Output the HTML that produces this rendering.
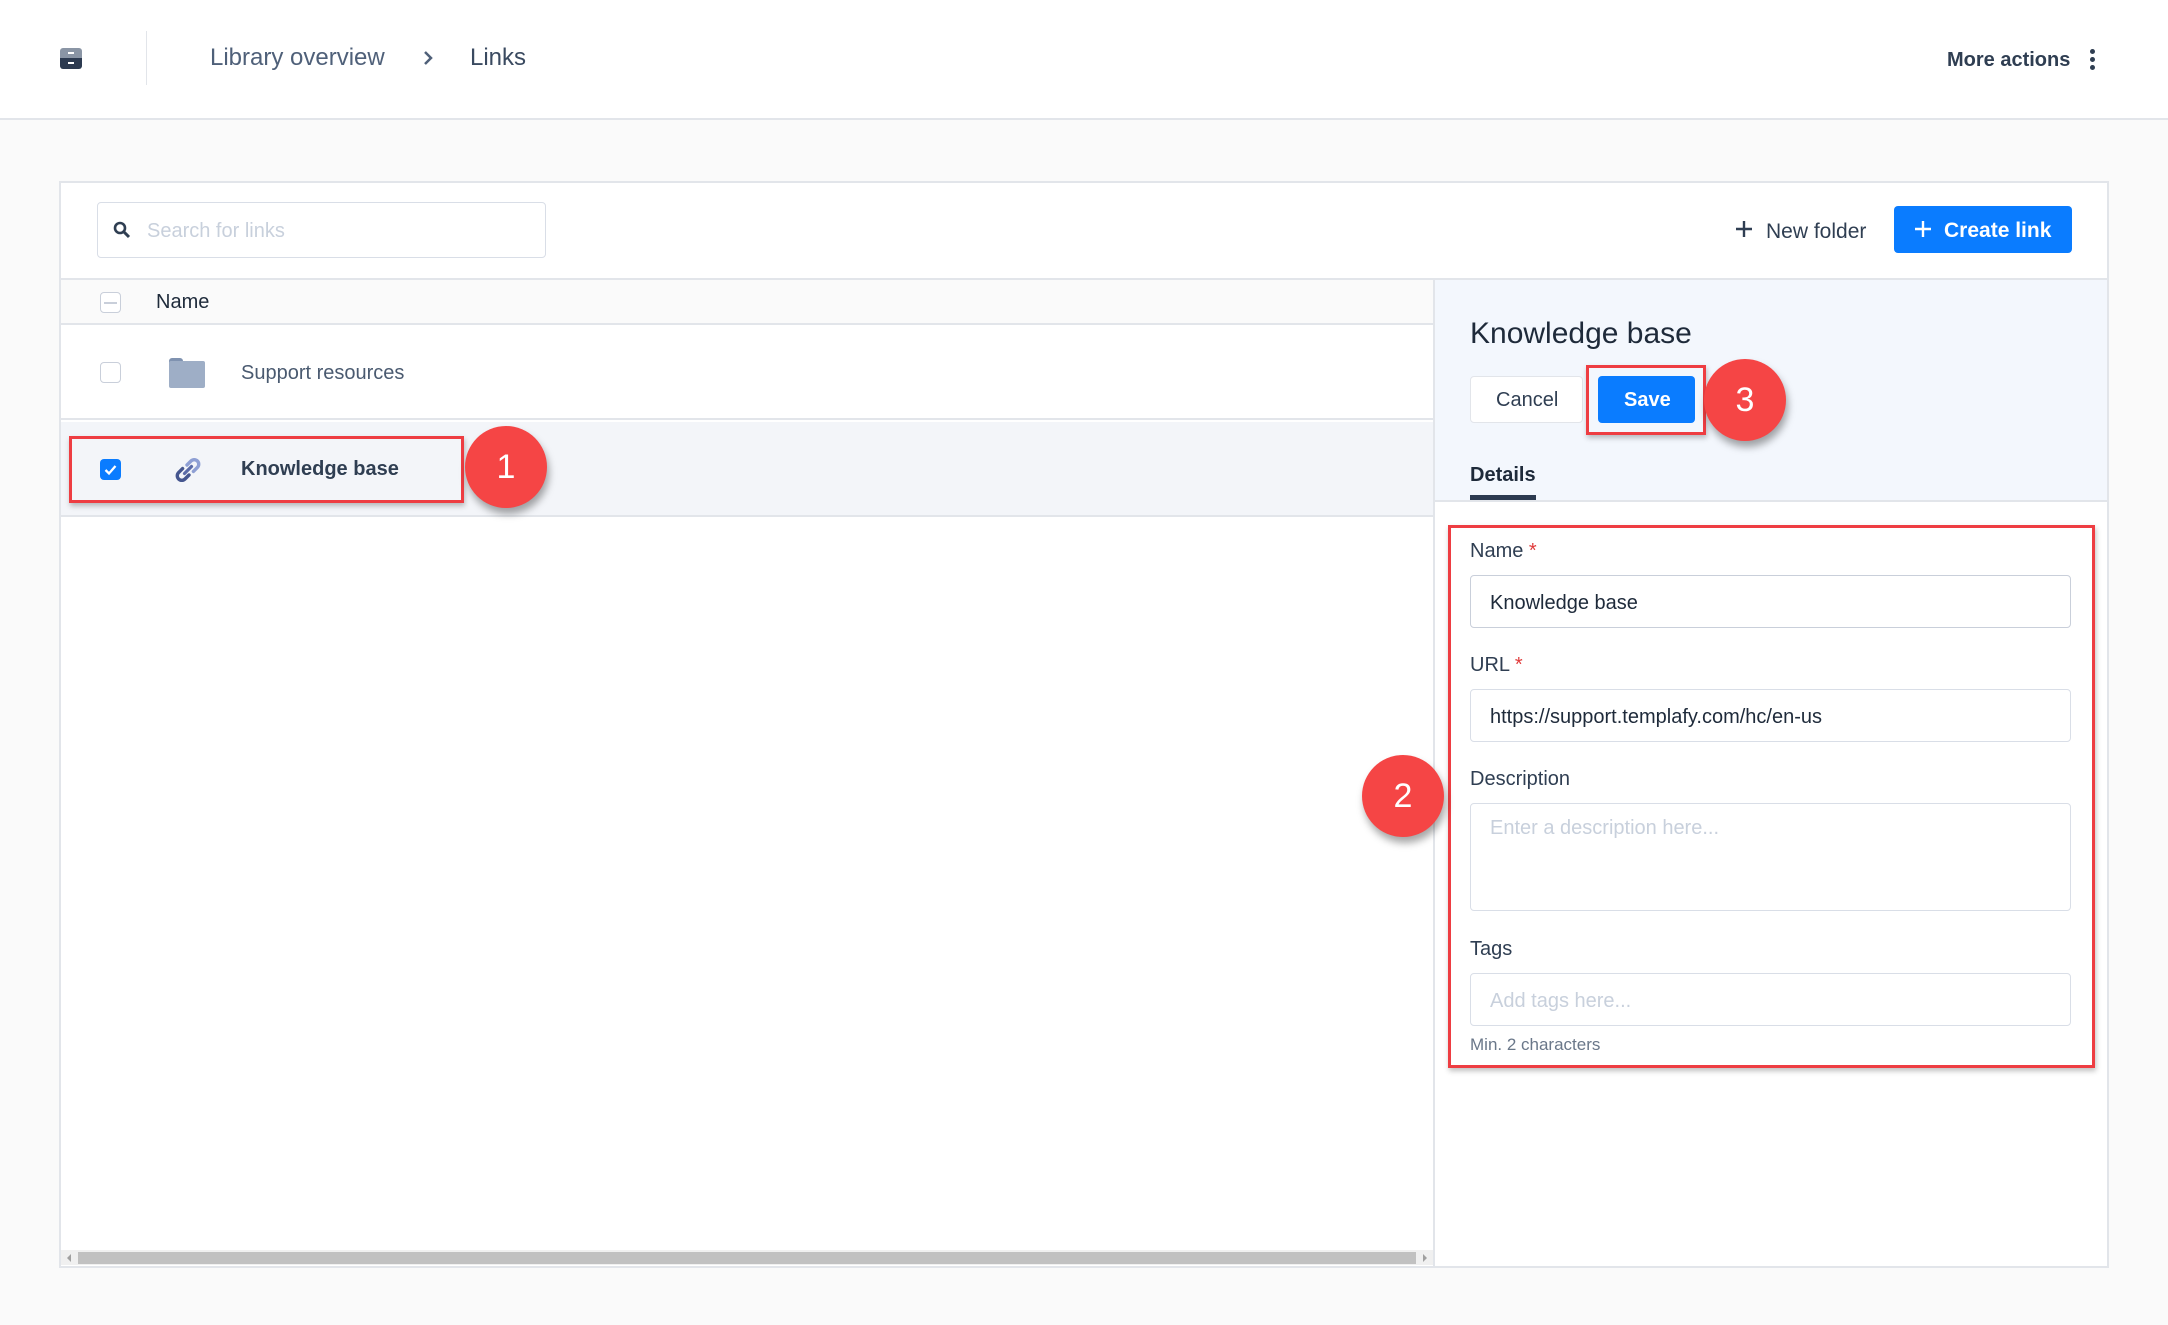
<!DOCTYPE html>
<html><head><meta charset="utf-8">
<style>
*{margin:0;padding:0;box-sizing:border-box}
body{width:2168px;height:1325px;background:#fafafa;font-family:"Liberation Sans",Arial,sans-serif;position:relative;overflow:hidden;color:#2f3e52}
.a{position:absolute}
.t{position:absolute;white-space:nowrap;line-height:1}
.cb{position:absolute;width:21px;height:21px;border:1.5px solid #c9cfda;border-radius:4px;background:#fff}
.inp{position:absolute;left:1470px;width:601px;background:#fff;border:1.5px solid #d9dee7;border-radius:4px}
.lbl{position:absolute;left:1470px;font-size:20px;color:#2f3e52;line-height:1}
.star{color:#e03a3a}
.circ{position:absolute;width:82px;height:82px;border-radius:50%;background:#f54545;color:#fff;font-size:34px;text-align:center;line-height:82px;box-shadow:2px 6px 8px rgba(0,0,0,.35)}
.rbox{position:absolute;border:3px solid #ee3d42;box-shadow:1px 3px 5px rgba(0,0,0,.25)}
</style></head><body>
<!-- header -->
<div class="a" style="left:0;top:0;width:2168px;height:120px;background:#fff;border-bottom:2px solid #e2e5ea"></div>
<div class="a" style="left:60px;top:48px;width:22px;height:10px;background:#8a95a5;border-radius:3px 3px 0 0"></div>
<div class="a" style="left:60px;top:58px;width:22px;height:11px;background:#2c3a50;border-radius:0 0 3px 3px"></div>
<div class="a" style="left:68px;top:52px;width:6px;height:2px;background:#fff"></div>
<div class="a" style="left:68px;top:62px;width:6px;height:2px;background:#fff"></div>
<div class="a" style="left:146px;top:31px;width:1px;height:54px;background:#e2e5ea"></div>
<div class="t" style="left:210px;top:46px;font-size:24px;color:#4f6079">Library overview</div>
<svg class="a" style="left:421px;top:50px" width="14" height="16" viewBox="0 0 14 16"><path d="M4 2l6 6-6 6" stroke="#4f6079" stroke-width="2.5" fill="none"/></svg>
<div class="t" style="left:470px;top:46px;font-size:24px;color:#3a4a60;font-weight:500">Links</div>
<div class="t" style="left:1947px;top:50px;font-size:20px;color:#2f3e52;font-weight:600">More actions</div>
<div class="a" style="left:2090px;top:49px;width:5px;height:5px;border-radius:50%;background:#2f3e52"></div>
<div class="a" style="left:2090px;top:57px;width:5px;height:5px;border-radius:50%;background:#2f3e52"></div>
<div class="a" style="left:2090px;top:65px;width:5px;height:5px;border-radius:50%;background:#2f3e52"></div>

<!-- card -->
<div class="a" style="left:59px;top:181px;width:2050px;height:1087px;background:#fff;border:2px solid #e2e5ea"></div>
<div class="a" style="left:97px;top:202px;width:449px;height:56px;border:1.5px solid #d9dee7;border-radius:4px;background:#fff"></div>
<svg class="a" style="left:112px;top:220px" width="20" height="20" viewBox="0 0 20 20"><circle cx="8" cy="8" r="5" stroke="#2f3e52" stroke-width="2.6" fill="none"/><path d="M12 12l5 5" stroke="#2f3e52" stroke-width="3"/></svg>
<div class="t" style="left:147px;top:221px;font-size:20px;color:#c8d0dc">Search for links</div>
<svg class="a" style="left:1735px;top:220px" width="18" height="18" viewBox="0 0 18 18"><path d="M9 1v16M1 9h16" stroke="#2f3e52" stroke-width="2.4"/></svg>
<div class="t" style="left:1766px;top:221px;font-size:21px;color:#2f3e52;font-weight:500">New folder</div>
<div class="a" style="left:1894px;top:206px;width:178px;height:47px;background:#0a7cff;border-radius:4px"></div>
<svg class="a" style="left:1914px;top:220px" width="18" height="18" viewBox="0 0 18 18"><path d="M9 1v16M1 9h16" stroke="#fff" stroke-width="2.4"/></svg>
<div class="t" style="left:1944px;top:220px;font-size:21px;color:#fff;font-weight:bold">Create link</div>
<div class="a" style="left:61px;top:278px;width:2046px;height:2px;background:#e2e5ea"></div>

<!-- list -->
<div class="a" style="left:61px;top:280px;width:1372px;height:45px;background:#fafafa;border-bottom:2px solid #e2e5ea"></div>
<div class="cb" style="left:100px;top:292px"></div>
<div class="a" style="left:104px;top:302px;width:13px;height:2px;background:#c9cfda"></div>
<div class="t" style="left:156px;top:292px;font-size:20px;color:#1e2a3a">Name</div>
<div class="a" style="left:61px;top:327px;width:1372px;height:93px;background:#fff;border-bottom:2px solid #e2e5ea"></div>
<div class="cb" style="left:100px;top:362px"></div>
<div class="a" style="left:169px;top:358px;width:14px;height:6px;background:#7f92b0;border-radius:3px 3px 0 0"></div>
<div class="a" style="left:169px;top:361px;width:36px;height:27px;background:#9eaec6;border-radius:2px"></div>
<div class="t" style="left:241px;top:363px;font-size:20px;color:#4a5a70">Support resources</div>
<div class="a" style="left:61px;top:422px;width:1372px;height:95px;background:#f3f5f9;border-bottom:2px solid #e2e5ea"></div>
<div class="a" style="left:100px;top:459px;width:21px;height:21px;background:#0a7cff;border-radius:4px"></div>
<svg class="a" style="left:102px;top:461px" width="17" height="17" viewBox="0 0 17 17"><path d="M3.5 9l3.5 3.5 6.5-7.5" stroke="#fff" stroke-width="2.3" fill="none"/></svg>
<svg class="a" style="left:172px;top:454px" width="32" height="32" viewBox="0 0 32 32"><path d="M15 11l4-4a4.5 4.5 0 0 1 6.4 6.4l-4 4" stroke="#8e9fd4" stroke-width="3.4" fill="none" stroke-linecap="round"/><path d="M17 21l-4 4a4.5 4.5 0 0 1-6.4-6.4l4-4" stroke="#45568f" stroke-width="3.4" fill="none" stroke-linecap="round"/><path d="M12.5 19.5l7-7" stroke="#5b6ba8" stroke-width="3.2" stroke-linecap="round"/></svg>
<div class="t" style="left:241px;top:459px;font-size:20px;color:#2f3e52;font-weight:bold">Knowledge base</div>
<div class="rbox" style="left:69px;top:436px;width:395px;height:67px"></div>
<div class="circ" style="left:465px;top:426px">1</div>

<!-- scrollbar -->
<div class="a" style="left:61px;top:1250px;width:1372px;height:15px;background:#f0f0f0"></div>
<div class="a" style="left:78px;top:1252px;width:1338px;height:12px;background:#c1c1c1"></div>
<svg class="a" style="left:65px;top:1253px" width="8" height="10"><path d="M6 1L2 5l4 4z" fill="#a0a0a0"/></svg>
<svg class="a" style="left:1421px;top:1253px" width="8" height="10"><path d="M2 1l4 4-4 4z" fill="#a0a0a0"/></svg>

<!-- right panel -->
<div class="a" style="left:1433px;top:280px;width:2px;height:986px;background:#e2e5ea"></div>
<div class="a" style="left:1435px;top:280px;width:672px;height:222px;background:#f3f7fd;border-bottom:2px solid #e2e5ea"></div>
<div class="t" style="left:1470px;top:319px;font-size:30px;color:#1e2a3a;font-weight:500">Knowledge base</div>
<div class="a" style="left:1470px;top:376px;width:113px;height:47px;background:#fff;border:1.5px solid #e2e5ea;border-radius:4px"></div>
<div class="t" style="left:1496px;top:390px;font-size:20px;color:#2f3e52;font-weight:500">Cancel</div>
<div class="a" style="left:1598px;top:376px;width:97px;height:47px;background:#0a7cff;border-radius:4px"></div>
<div class="t" style="left:1624px;top:390px;font-size:20px;color:#fff;font-weight:bold">Save</div>
<div class="rbox" style="left:1586px;top:365px;width:120px;height:70px"></div>
<div class="circ" style="left:1704px;top:359px">3</div>
<div class="t" style="left:1470px;top:465px;font-size:20px;color:#1e2a3a;font-weight:600">Details</div>
<div class="a" style="left:1470px;top:495px;width:66px;height:5px;background:#2c3a50"></div>

<div class="lbl" style="top:541px">Name <span class="star">*</span></div>
<div class="inp" style="top:575px;height:53px;border-color:#c9cfda"></div>
<div class="t" style="left:1490px;top:593px;font-size:20px;color:#1e2a3a">Knowledge base</div>
<div class="lbl" style="top:655px">URL <span class="star">*</span></div>
<div class="inp" style="top:689px;height:53px"></div>
<div class="t" style="left:1490px;top:707px;font-size:20px;color:#1e2a3a">https://support.templafy.com/hc/en-us</div>
<div class="lbl" style="top:769px">Description</div>
<div class="inp" style="top:803px;height:108px"></div>
<div class="t" style="left:1490px;top:818px;font-size:20px;color:#c8d0dc">Enter a description here...</div>
<div class="lbl" style="top:939px">Tags</div>
<div class="inp" style="top:973px;height:53px"></div>
<div class="t" style="left:1490px;top:991px;font-size:20px;color:#c8d0dc">Add tags here...</div>
<div class="t" style="left:1470px;top:1036px;font-size:17px;color:#6a7789">Min. 2 characters</div>
<div class="rbox" style="left:1448px;top:525px;width:647px;height:543px"></div>
<div class="circ" style="left:1362px;top:755px">2</div>
</body></html>
